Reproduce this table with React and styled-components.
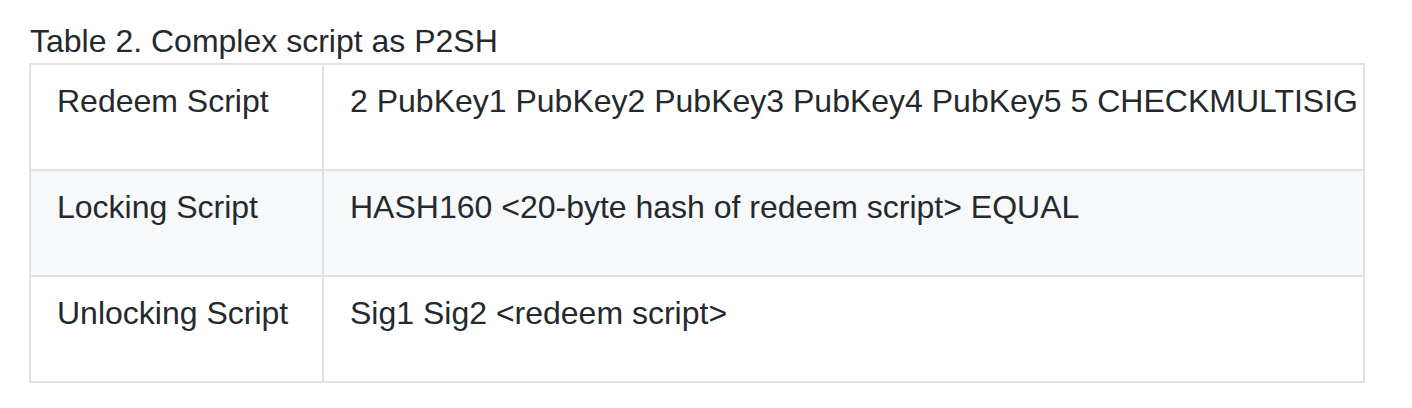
import React from "react";
import styled, { createGlobalStyle } from "styled-components";

const GlobalStyle = createGlobalStyle`
  html, body {
    margin: 0;
    padding: 0;
    background: #ffffff;
  }
  body {
    font-family: "Liberation Sans", Arial, Helvetica, sans-serif;
    color: #24292e;
  }
`;

const Page = styled.div`
  padding: 21px 0 0 29px;
`;

const Caption = styled.div`
  font-size: 32px;
  line-height: 40px;
  color: #24292e;
  margin: 0 0 2px 1px;
`;

const Table = styled.table`
  border-collapse: collapse;
  border-spacing: 0;
  table-layout: fixed;
  width: 1336px;
  font-size: 32px;
  color: #24292e;
`;

const Col = styled.col`
  width: ${(p) => p.$width};
`;

const Row = styled.tr`
  background: ${(p) => (p.$striped ? "#f6f8fa" : "#ffffff")};
`;

const Cell = styled.td`
  border: 2px solid #dfe2e5;
  padding: 12px 26px;
  vertical-align: top;
  white-space: nowrap;
`;

const CellText = styled.p`
  margin: 0 0 32px;
  line-height: 48px;
`;

const rows = [
  ["Redeem Script", "2 PubKey1 PubKey2 PubKey3 PubKey4 PubKey5 5 CHECKMULTISIG"],
  ["Locking Script", "HASH160 <20-byte hash of redeem script> EQUAL"],
  ["Unlocking Script", "Sig1 Sig2 <redeem script>"],
];

export default function App() {
  return (
    <>
      <GlobalStyle />
      <Page>
        <Caption>Table 2. Complex script as P2SH</Caption>
        <Table>
          <colgroup>
            <Col $width="293px" />
            <Col $width="auto" />
          </colgroup>
          <tbody>
            {rows.map(([label, value], i) => (
              <Row key={label} $striped={i % 2 === 1}>
                <Cell>
                  <CellText>{label}</CellText>
                </Cell>
                <Cell>
                  <CellText>{value}</CellText>
                </Cell>
              </Row>
            ))}
          </tbody>
        </Table>
      </Page>
    </>
  );
}
